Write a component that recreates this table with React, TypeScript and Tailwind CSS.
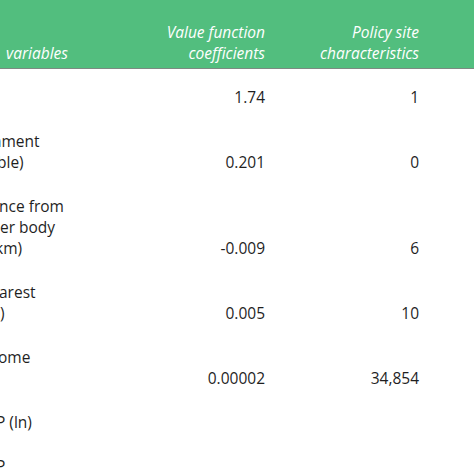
const rows = [
  { label: [{ t: '', ml: '' }], coef: '1.74', site: '1' },
  {
    label: [
      { t: 'nment', ml: '-ml-[8px]' },
      { t: 'ble)', ml: '-ml-[3px]' }
    ],
    coef: '0.201',
    site: '0'
  },
  {
    label: [
      { t: 'nce from', ml: '-ml-[1px]' },
      { t: 'er body', ml: '' },
      { t: 'km)', ml: '-ml-[5px]' }
    ],
    coef: '-0.009',
    site: '6'
  },
  {
    label: [
      { t: 'arest', ml: '-ml-[1px]' },
      { t: ')', ml: '' }
    ],
    coef: '0.005',
    site: '10'
  },
  {
    label: [
      { t: 'ome', ml: '-ml-[2px]' },
      { t: '', ml: '' }
    ],
    coef: '0.00002',
    site: '34,854'
  },
  { label: [{ t: 'P (ln)', ml: '-ml-[4px]' }], coef: '', site: '' },
  { label: [{ t: 'P', ml: '-ml-[4px]' }], coef: '', site: '' }
]

export default function App() {
  return (
    <div className="w-[474px] h-[474px] overflow-hidden bg-white font-['Open_Sans',sans-serif] text-[15.5px] leading-[21px] text-[#1f1f1f] [font-variant-ligatures:none]">
      <div className="flex items-end h-[69px] pb-[4px] bg-[#52be7e] border-b border-[#7d8a82] text-white italic">
        <div className="w-[150px] pl-[6px]">variables</div>
        <div className="w-[115px] text-right">
          <p>Value function</p>
          <p>coefficients</p>
        </div>
        <div className="w-[154px] text-right">
          <p>Policy site</p>
          <p>characteristics</p>
        </div>
      </div>

      <div className="pt-[6px]">
        {rows.map((row, i) => (
          <div key={i} className="flex items-end py-[11.5px]">
            <div className="w-[150px] whitespace-nowrap">
              {row.label.map((line, j) => (
                <p key={j} className={`${line.ml} h-[21px]`}>
                  {line.t}
                </p>
              ))}
            </div>
            <div className="w-[115px] text-right">{row.coef}</div>
            <div className="w-[154px] text-right">{row.site}</div>
          </div>
        ))}
      </div>
    </div>
  )
}
